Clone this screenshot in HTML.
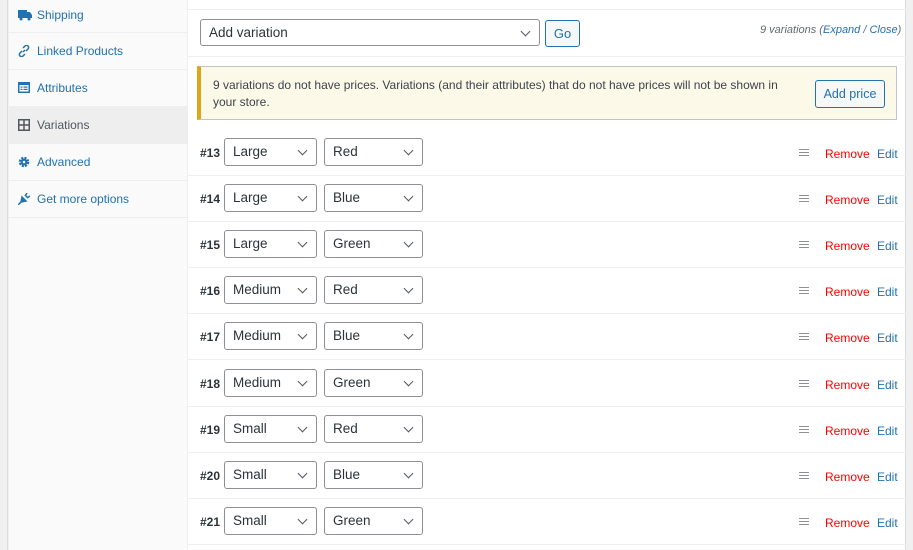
<!DOCTYPE html>
<html><head><meta charset="utf-8"><style>
*{box-sizing:border-box;margin:0;padding:0}
body{width:913px;height:550px;overflow:hidden;background:#f0f0f0;font-family:"Liberation Sans",sans-serif;font-size:13px;color:#3c434a;position:relative}
.a{position:absolute}
#strip{left:0;top:0;width:8px;height:550px;background:#f0f0f0;border-right:1px solid #dcdcde}
#side{left:9px;top:0;width:179px;height:550px;background:#fafafa;border-right:1px solid #eee}
.it{position:absolute;left:0;width:178px;height:37px;border-bottom:1px solid #eee;color:#2271b1;font-size:12px;line-height:36px;padding-left:28px}
.it svg{position:absolute;left:9px;top:12px}
#main{left:188px;top:0;width:718px;height:550px;background:#fff;border-right:1px solid #dcdcde}
.hl{position:absolute;left:0;width:718px;height:1px;background:#eee}
.sel{position:absolute;height:28px;border:1px solid #8c8f94;border-radius:3px;background:#fff;padding-left:8px;line-height:25px;font-size:13.5px;color:#2c3338}
.sel:after{content:"";position:absolute;right:10px;top:8px;width:6px;height:6px;border-right:1.5px solid #50575e;border-bottom:1.5px solid #50575e;transform:rotate(45deg)}
.num{position:absolute;left:12px;font-weight:bold;font-size:12px;color:#2c3338}
.ham{position:absolute;left:611px;width:10px;height:7px;border-top:1px solid #8c8f94;border-bottom:1px solid #8c8f94}
.ham:after{content:"";position:absolute;left:0;top:2px;width:10px;height:1px;background:#8c8f94;}
.rm{position:absolute;left:637px;color:#f00;font-size:12px}
.ed{position:absolute;left:689px;color:#2271b1;font-size:12px}
</style></head><body>
<div id="strip" class="a"></div>
<div id="side" class="a">
 <div class="it" style="top:-3px;height:36px"><svg width="14" height="12" viewBox="0 0 14 12"><path d="M0 1h9v8H0zM9 3h3l2 3v3H9z" fill="#2271b1"/><circle cx="3" cy="10" r="1.5" fill="#2271b1"/><circle cx="11" cy="10" r="1.5" fill="#2271b1"/></svg>Shipping</div>
 <div class="it" style="top:33px"><svg width="12" height="12" viewBox="0 0 12 12"><path d="M5 7l2-2M4 6L2 8a2 2 0 003 3l2-2M8 6l2-2a2 2 0 00-3-3L5 3" stroke="#2271b1" stroke-width="1.5" fill="none"/></svg>Linked Products</div>
 <div class="it" style="top:70px"><svg width="12" height="11" viewBox="0 0 12 11"><rect width="12" height="11" fill="#2271b1"/><rect x="1.5" y="3" width="9" height="6.5" fill="#fff"/><rect x="2.5" y="4.5" width="2" height="1.2" fill="#2271b1"/><rect x="5.5" y="4.5" width="4" height="1.2" fill="#2271b1"/><rect x="2.5" y="6.8" width="2" height="1.2" fill="#2271b1"/><rect x="5.5" y="6.8" width="4" height="1.2" fill="#2271b1"/></svg>Attributes</div>
 <div class="it" style="top:107px;background:#eee;color:#50575e"><svg width="12" height="12" viewBox="0 0 12 12"><path d="M.75.75h10.5v10.5H.75zM6 .75v10.5M.75 6h10.5" stroke="#50575e" stroke-width="1.5" fill="none"/></svg>Variations</div>
 <div class="it" style="top:144px"><svg width="12" height="12" viewBox="0 0 12 12"><circle cx="6" cy="6" r="4" fill="none" stroke="#2271b1" stroke-width="2.5" stroke-dasharray="2 1.2"/><circle cx="6" cy="6" r="3.5" fill="#2271b1"/><circle cx="6" cy="6" r="1.3" fill="#fafafa"/></svg>Advanced</div>
 <div class="it" style="top:181px"><svg width="12" height="12" viewBox="0 0 12 12"><path d="M0 12l3-3 1-5 4 4-5 1zM7 2l3 3M9 0l-2 3M12 3l-3 2" stroke="#2271b1" stroke-width="1.5" fill="#2271b1"/></svg>Get more options</div>
</div>
<div id="main" class="a">
 <div class="hl" style="top:9px"></div>
 <div class="sel" style="left:12px;top:19px;width:340px;height:27px">Add variation</div>
 <div class="a" style="left:357px;top:20px;width:35px;height:27px;border:1px solid #2271b1;border-radius:3px;background:#f6f7f7;color:#2271b1;text-align:center;line-height:25px">Go</div>
 <div class="a" style="left:572px;top:24px;font-style:italic;font-size:11px;color:#646970">9 variations (<span style="color:#2271b1">Expand</span> / <span style="color:#2271b1">Close</span>)</div>
 <div class="hl" style="top:56px"></div>
 <div class="a" style="left:9px;top:66px;width:700px;height:54px;background:#fcf9e8;border:1px solid #c3c4c7;border-left:4px solid #dba617;padding:10px 0 0 12px;font-size:12px;line-height:17px;color:#3c434a">9 variations do not have prices. Variations (and their attributes) that do not have prices will not be shown in<br>your store.</div>
 <div class="a" style="left:627px;top:80px;width:70px;height:28px;border:1px solid #2271b1;border-radius:3px;background:#f6f7f7;color:#2271b1;text-align:center;line-height:26px;font-size:12.5px">Add price</div>
 <div id="rows"></div>
</div>
<script>
var d=[["13","Large","Red"],["14","Large","Blue"],["15","Large","Green"],["16","Medium","Red"],["17","Medium","Blue"],["18","Medium","Green"],["19","Small","Red"],["20","Small","Blue"],["21","Small","Green"]];
var h="";d.forEach(function(r,i){var t=Math.round(138+i*46.1);
h+='<div class="num" style="top:'+(t+8)+'px">#'+r[0]+'</div><div class="sel" style="left:36px;top:'+t+'px;width:93px">'+r[1]+'</div><div class="sel" style="left:136px;top:'+t+'px;width:99px">'+r[2]+'</div><div class="ham" style="top:'+(t+11)+'px"></div><div class="rm" style="top:'+(t+9)+'px">Remove</div><div class="ed" style="top:'+(t+9)+'px">Edit</div><div class="hl" style="top:'+(t+37)+'px"></div>';});
document.getElementById("rows").innerHTML=h;
</script>
</body></html>
